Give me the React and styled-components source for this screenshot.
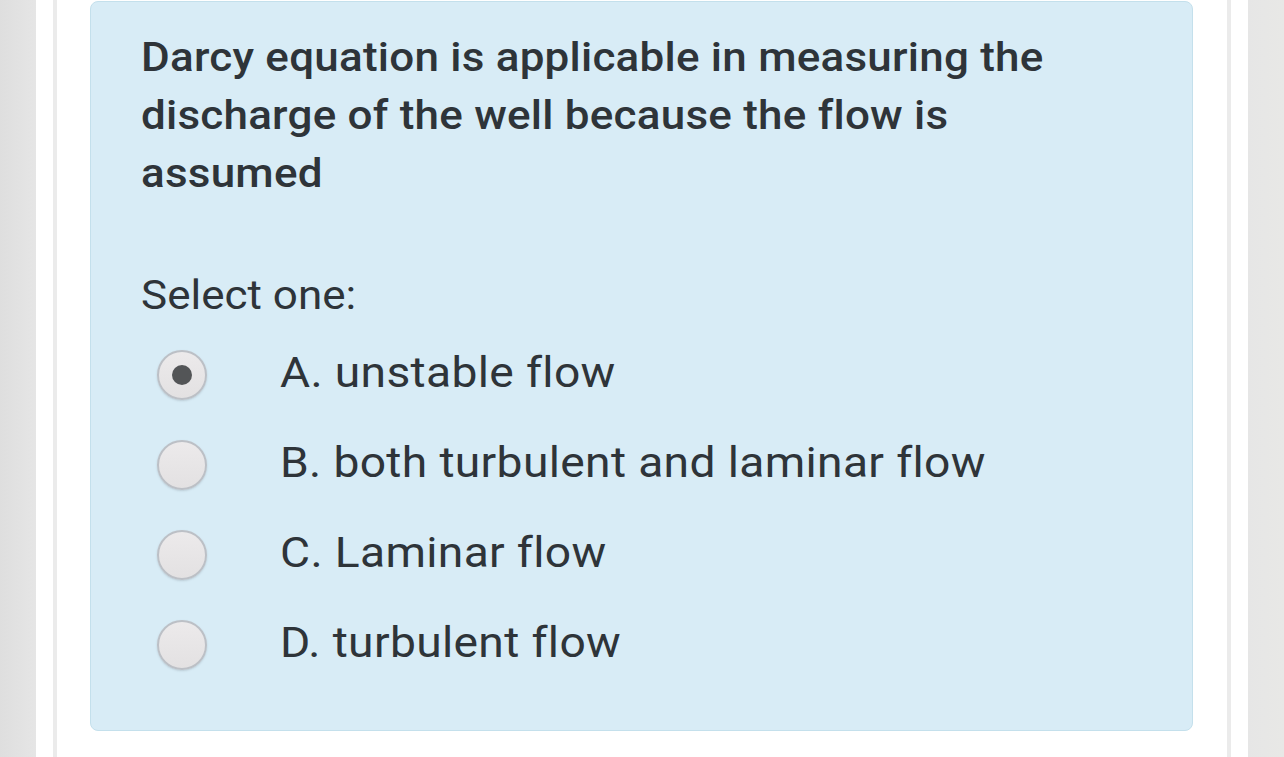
import React from "react"
import styled, { createGlobalStyle } from "styled-components"

const GlobalStyle = createGlobalStyle`
    html, body {
        margin: 0;
        padding: 0;
        background: #e5e5e5;
        font-family: Roboto, "Liberation Sans", Arial, sans-serif;
    }
`

const Page = styled.div`
    height: 757px;
    overflow: hidden;
    padding: 0 36px;
    background: linear-gradient(90deg, #dedede 0%, #e6e6e6 3%, #e6e6e6 97%, #e8e8e6 100%);
`

const Card = styled.div`
    height: 100%;
    background: #fff;
    padding: 0 17px;
`

const CardInner = styled.div`
    height: 100%;
    box-sizing: border-box;
    border-left: 4px solid #ebebeb;
    border-right: 4px solid #ebebeb;
    padding: 1px 34px 0 33px;
`

const Formulation = styled.div`
    box-sizing: border-box;
    height: 730px;
    background: #d8ecf6;
    border: 1px solid #c4e0ec;
    border-radius: 8px;
    padding: 27px 50px 0;
    color: #2e3439;
`

// the source screenshot is stretched sideways a little, so the text is too
const QuestionText = styled.p`
    margin: 0;
    font-size: 40px;
    font-weight: 500;
    line-height: 58px;
    letter-spacing: 0.2px;
    transform: scaleX(1.1);
    transform-origin: left top;
`

const Prompt = styled.div`
    margin-top: 64px;
    font-size: 40px;
    line-height: 58px;
    transform: scaleX(1.1);
    transform-origin: left top;
`

const OptionList = styled.div`
    display: flex;
    flex-direction: column;
    margin-top: 5px;
    padding-left: 16px;
`

const Option = styled.label`
    display: flex;
    align-items: center;
    height: 90px;
    column-gap: 73px;
    font-size: 42px;
    letter-spacing: 0.3px;
`

const OptionLabel = styled.span`
    margin-top: -5px;
    transform: scaleX(1.1);
    transform-origin: left center;
`

const Radio = styled.span`
    flex: none;
    width: 50px;
    height: 50px;
    box-sizing: border-box;
    border-radius: 50%;
    border: 2px solid #bcc0c6;
    background: linear-gradient(180deg, #eceaeb 0%, #e3e1e2 100%);
    box-shadow: 0 1px 2px rgba(120, 130, 140, 0.3);
    display: flex;
    align-items: center;
    justify-content: center;

    &::after {
        content: "";
        width: 20px;
        height: 20px;
        border-radius: 50%;
        background: #535557;
        display: ${props => (props.$checked ? "block" : "none")};
    }
`

const options = [
    { letter: "A", text: "unstable flow", checked: true },
    { letter: "B", text: "both turbulent and laminar flow" },
    { letter: "C", text: "Laminar flow" },
    { letter: "D", text: "turbulent flow" },
]

const App = () => {
    return (
        <>
            <GlobalStyle />
            <Page>
                <Card>
                    <CardInner>
                        <Formulation>
                            <QuestionText>
                                Darcy equation is applicable in measuring the
                                <br />
                                discharge of the well because the flow is
                                <br />
                                assumed
                            </QuestionText>
                            <Prompt>Select one:</Prompt>
                            <OptionList>
                                {options.map(o => (
                                    <Option key={o.letter}>
                                        <Radio $checked={o.checked} />
                                        <OptionLabel>{o.letter}. {o.text}</OptionLabel>
                                    </Option>
                                ))}
                            </OptionList>
                        </Formulation>
                    </CardInner>
                </Card>
            </Page>
        </>
    )
}

export default App
